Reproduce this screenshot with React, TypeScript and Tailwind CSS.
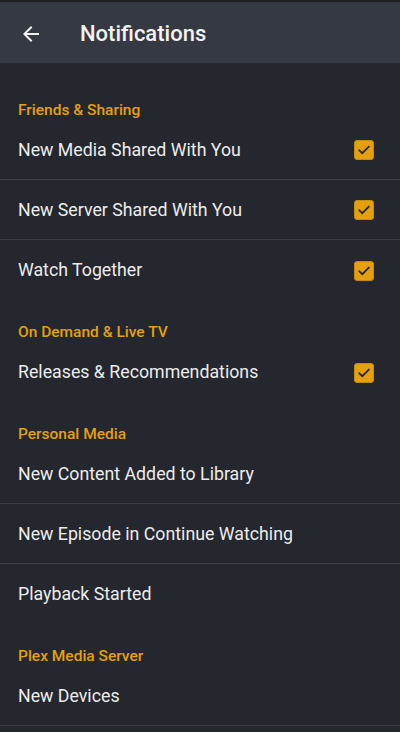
type Item = { label: string; checked?: boolean };
type Section = { title: string; items: Item[]; lastDivider?: boolean };

const sections: Section[] = [
  {
    title: "Friends & Sharing",
    items: [
      { label: "New Media Shared With You", checked: true },
      { label: "New Server Shared With You", checked: true },
      { label: "Watch Together", checked: true },
    ],
  },
  {
    title: "On Demand & Live TV",
    items: [{ label: "Releases & Recommendations", checked: true }],
  },
  {
    title: "Personal Media",
    items: [
      { label: "New Content Added to Library" },
      { label: "New Episode in Continue Watching" },
      { label: "Playback Started" },
    ],
  },
  {
    title: "Plex Media Server",
    items: [{ label: "New Devices" }],
    lastDivider: true,
  },
];

function Checkbox() {
  return (
    <div className="w-5 h-5 rounded-[3px] bg-[#e5a00d] border border-[#c78b0a] flex items-center justify-center">
      <svg width="14" height="14" viewBox="0 0 24 24" fill="none">
        <path
          d="M4 12.5l5 5L20 6.5"
          stroke="#24272d"
          strokeWidth="3.2"
          strokeLinecap="square"
        />
      </svg>
    </div>
  );
}

export default function App() {
  return (
    <div
      className="w-[400px] h-[732px] overflow-hidden bg-[#24272d]"
      style={{ fontFamily: "Roboto, 'Noto Sans', sans-serif" }}
    >
      <div className="h-[2px] bg-[#1c1e22]" />
      {/* toolbar */}
      <div className="h-[61px] pt-[2px] bg-[#353941] flex items-center">
        <svg
          className="ml-[19px]"
          width="24"
          height="24"
          viewBox="0 0 24 24"
          fill="#f2f2f2"
        >
          <path d="M20 11H7.83l5.59-5.59L12 4l-8 8 8 8 1.41-1.41L7.83 13H20v-2z" />
        </svg>
        <h1 className="ml-[37px] text-[22px] font-medium text-[#f2f2f2]">
          Notifications
        </h1>
      </div>

      <div className="pt-[15px]">
        {sections.map((section) => (
          <div key={section.title}>
            <div className="pt-[22px] px-[18px]">
              <h2 className="text-[15.5px] leading-5 font-medium text-[#e5a00d]">
                {section.title}
              </h2>
            </div>
            {section.items.map((item, i) => {
              const divider =
                i < section.items.length - 1 || section.lastDivider;
              return (
                <div
                  key={item.label}
                  className={
                    "h-[60px] pt-[1px] pl-[18px] pr-[26px] flex items-center justify-between " +
                    (divider ? "border-b border-[#3b3e45]" : "")
                  }
                >
                  <span className="text-[17.75px] text-[#ececec]">
                    {item.label}
                  </span>
                  {item.checked && <Checkbox />}
                </div>
              );
            })}
          </div>
        ))}
      </div>
    </div>
  );
}
